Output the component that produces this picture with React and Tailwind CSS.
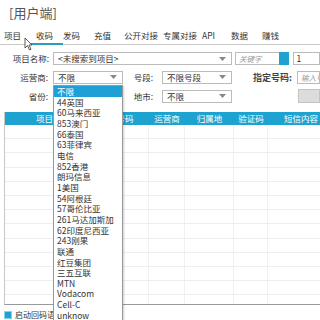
const tabs = [
  { label: "项目", w: "w-[30px]" },
  { label: "收码", w: "w-[29px]", active: true },
  { label: "发码", w: "w-[31px]" },
  { label: "充值", w: "w-[30px]" },
  { label: "公开对接", w: "w-[39px]" },
  { label: "专属对接", w: "w-[39px]" },
  { label: "API", w: "w-[29px]" },
  { label: "数据", w: "w-[31px]" },
  { label: "赚钱", w: "w-[30px]" },
];

const carriers = [
  "不限",
  "44英国",
  "60马来西亚",
  "853澳门",
  "66泰国",
  "63菲律宾",
  "电信",
  "852香港",
  "朗玛信息",
  "1美国",
  "54阿根廷",
  "57哥伦比亚",
  "261马达加斯加",
  "62印度尼西亚",
  "243刚果",
  "联通",
  "红豆集团",
  "三五互联",
  "MTN",
  "Vodacom",
  "Cell-C",
  "unknow",
];

const columns = [
  { label: "项目名称", w: "w-[96px]" },
  { label: "号码", w: "w-[48px]" },
  { label: "运营商", w: "w-[36px]" },
  { label: "归属地", w: "w-[49px]" },
  { label: "验证码", w: "w-[34px]" },
  { label: "短信内容", w: "w-[66px]" },
];

const Arrow = () => (
  <svg width="7" height="4" viewBox="0 0 7 4" className="shrink-0">
    <path d="M0 0 L7 0 L3.5 4 Z" fill="#888" />
  </svg>
);

const Select = ({ text, w }) => (
  <div
    className={`${w} h-[13px] border border-[#bbb] bg-white flex items-center justify-between pl-[4px] pr-[5px]`}
  >
    <span>{text}</span>
    <Arrow />
  </div>
);

export default function App() {
  return (
    <div className="w-[320px] h-[320px] overflow-hidden bg-white relative font-['Microsoft_YaHei','Noto_Sans_CJK_SC',sans-serif] text-[8.5px] leading-[11px] text-[#333]">
      {/* title */}
      <div className="h-[25px] pl-[9px] pt-[5px] text-[13px] leading-[15px] text-[#555]">
        [用户端]
      </div>

      {/* tabs */}
      <div className="relative h-[20px] border-b border-[#c8c8c8] flex items-center pl-[4px] pt-[1px]">
        {tabs.map((t) => (
          <span
            key={t.label}
            className={`${t.w} shrink-0 ${t.active ? "text-center pr-[8px]" : ""}`}
          >
            {t.label}
          </span>
        ))}
        <div className="absolute left-[25px] bottom-[-1px] w-[38px] h-[2px] bg-[#2aa0b8]" />
        <svg
          width="9"
          height="14"
          viewBox="0 0 9 14"
          className="absolute left-[24px] top-[12px]"
        >
          <path
            d="M1 1 L1 11 L3.5 8.5 L5.5 13 L7 12.3 L5 8 L8 8 Z"
            fill="#fff"
            stroke="#333"
            strokeWidth="0.8"
          />
        </svg>
      </div>

      {/* form */}
      <div className="pt-[7px] flex flex-col gap-[5px]">
        <div className="flex items-center h-[13px]">
          <span className="w-[49px] text-right shrink-0">项目名称:</span>
          <div className="ml-[4px]">
            <Select text="<未搜索到项目>" w="w-[179px]" />
          </div>
          <div className="ml-[3px] w-[48px] h-[13px] border border-[#bbb] border-r-0 pl-[3px] italic text-[#999] text-[7.5px] flex items-center">
            关键字
          </div>
          <div className="w-[11px] h-[13px] bg-[#1ea2cf]" />
          <div className="ml-[4px] w-[30px] h-[13px] border border-[#bbb] pl-[3px] flex items-center">
            1
          </div>
        </div>

        <div className="flex items-center h-[14px]">
          <span className="w-[48px] text-right shrink-0">运营商:</span>
          <div className="ml-[5px]">
            <Select text="不限" w="w-[70px]" />
          </div>
          <span className="w-[30px] text-right shrink-0">号段:</span>
          <div className="ml-[9px]">
            <Select text="不限号段" w="w-[70px]" />
          </div>
          <span className="ml-[21px] text-[9px] font-bold text-[#444] shrink-0">
            指定号码:
          </span>
          <div className="ml-[5px] w-[30px] h-[13px] border border-[#bbb] pl-[3px] italic text-[#999] text-[7.5px] flex items-center whitespace-nowrap overflow-hidden">
            输入号码
          </div>
        </div>

        <div className="flex items-center h-[14px]">
          <span className="w-[48px] text-right shrink-0">省份:</span>
          <div className="ml-[5px]">
            <Select text="不限" w="w-[70px]" />
          </div>
          <span className="w-[30px] text-right shrink-0">地市:</span>
          <div className="ml-[9px]">
            <Select text="不限" w="w-[70px]" />
          </div>
          <div className="ml-[66px] w-[30px] h-[14px] bg-[#dcdcdc] border border-[#c4c4c4]" />
        </div>
      </div>

      {/* table */}
      <div className="mt-[9px] ml-[4px] h-[193px] border-l border-[#c8c8c8] border-b border-b-[#999] overflow-hidden">
        <div className="flex h-[13px] bg-[#1ea2cf] text-white">
          {columns.map((c) => (
            <div
              key={c.label}
              className={`${c.w} shrink-0 text-center leading-[13px]`}
            >
              {c.label}
            </div>
          ))}
        </div>
        {Array.from({ length: 13 }).map((_, i) => (
          <div key={i} className="flex h-[14.2px] border-b border-[#eee]">
            {columns.map((c) => (
              <div key={c.label} className={`${c.w} shrink-0 border-r border-[#f0f0f0]`} />
            ))}
          </div>
        ))}
      </div>

      {/* bottom */}
      <div className="flex items-center ml-[4px] mt-[4px] gap-[3px]">
        <div className="w-[8px] h-[8px] bg-[#1ea2cf] border border-[#8fcfe6]" />
        <span className="text-[8px]">启动回码语音</span>
      </div>

      {/* open dropdown */}
      <div className="absolute left-[53px] top-[85px] w-[70px] h-[240px] bg-white border border-[#999] shadow-[1px_1px_2px_rgba(0,0,0,0.2)]">
        {carriers.map((c, i) => (
          <div
            key={c}
            className={`h-[10.67px] leading-[10.67px] pl-[3px] whitespace-nowrap ${
              i === 0 ? "bg-[#1e9fd6] text-white" : "text-[#333]"
            }`}
          >
            {c}
          </div>
        ))}
      </div>
    </div>
  );
}
